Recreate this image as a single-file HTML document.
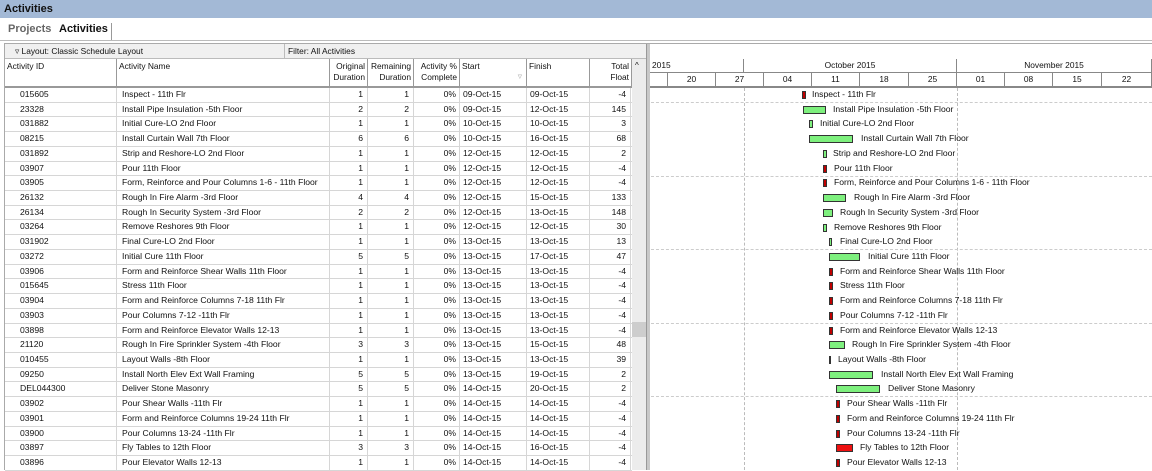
<!DOCTYPE html>
<html><head><meta charset="utf-8"><style>
*{margin:0;padding:0;box-sizing:border-box}
body{width:1152px;height:470px;overflow:hidden;background:#fff;font-family:"Liberation Sans",Arial,sans-serif;font-size:8.6px;color:#111;position:relative}
.title{position:absolute;left:0;top:0;width:1152px;height:18px;background:#a3b9d6;font-weight:bold;font-size:11px;padding:3px 0 0 4px}
.tabs{position:absolute;left:0;top:18px;width:1152px;height:23px;background:#fff;border-bottom:1px solid #bbb}
.tab{position:absolute;top:5px;font-weight:bold;font-size:11px}
.frame{position:absolute;left:4px;top:43px;width:1148px;height:427px;border:1px solid #aaa;border-right:none;border-bottom:none}
.lay{position:absolute;left:5px;top:44px;width:641px;height:15px;background:#f0f0f0;border-bottom:1px solid #bbb;font-size:8.4px}
.hdr{position:absolute;top:59px;height:29px;background:#fff;border-right:1px solid #999;border-bottom:2px solid #999;font-size:8.4px;line-height:10.5px;padding:2px 2px}
.rows{position:absolute;left:5px;top:88px;width:627px}
.r{display:flex;height:14.72px;border-bottom:1px solid #d6d6d6;line-height:13px}
.r div{border-right:1px solid #d6d6d6;white-space:nowrap;overflow:hidden}
.c1{width:112px;padding-left:15px}.c2{width:213px;padding-left:5px}.c3{width:38px;text-align:right;padding-right:4px}.c4{width:46px;text-align:right;padding-right:4px}.c5{width:46px;text-align:right;padding-right:3px}.c6{width:67px;padding-left:3px}.c7{width:63px;padding-left:3px}.c8{width:41px;text-align:right;padding-right:4px}
.sb{position:absolute;left:632px;top:59px;width:14px;height:411px;background:#ececec}
.div{position:absolute;left:646px;top:44px;width:4px;height:426px;background:#c8c8c8;border-left:1px solid #999}
.th{position:absolute;top:59px;height:14px;border-right:1px solid #888;border-bottom:1px solid #888;text-align:center;font-size:8.4px;line-height:13px}
.tw{position:absolute;top:73px;height:15px;border-right:1px solid #888;border-bottom:2px solid #888;text-align:center;font-size:8.4px;line-height:13px}
.vl{position:absolute;top:88px;height:382px;border-left:1px dashed #bbb;width:0}
.hl{position:absolute;left:651px;width:501px;border-top:1px dashed #ccc;height:0}
.b{position:absolute;height:8px;border:1px solid #333}
.g{background:#7ef07e}.rd{background:#c00000}.rb{background:#ee1111}
.l{position:absolute;white-space:nowrap;font-size:8.6px}
</style></head><body>
<div class="title">Activities</div>
<div class="tabs"><span class="tab" style="left:8px;color:#666">Projects</span><span class="tab" style="left:59px;padding-right:3px;border-right:1px solid #999;height:17px">Activities</span></div>
<div class="frame"></div>
<div class="lay"><span style="position:absolute;left:10px;top:2px">▿ Layout: Classic Schedule Layout</span><span style="position:absolute;left:279px;top:0;height:15px;border-left:1px solid #bbb;padding:2px 0 0 3px">Filter: All Activities</span></div>
<div class="hdr" style="left:5px;width:112px">Activity ID</div>
<div class="hdr" style="left:117px;width:213px">Activity Name</div>
<div class="hdr" style="left:330px;width:38px;text-align:right">Original<br>Duration</div>
<div class="hdr" style="left:368px;width:46px;text-align:right">Remaining<br>Duration</div>
<div class="hdr" style="left:414px;width:46px;text-align:right">Activity %<br>Complete</div>
<div class="hdr" style="left:460px;width:67px">Start<span style="position:absolute;right:4px;top:12px;color:#aaa">▿</span></div>
<div class="hdr" style="left:527px;width:63px">Finish</div>
<div class="hdr" style="left:590px;width:42px;text-align:right">Total<br>Float</div>
<div class="sb"><div style="position:absolute;left:3px;top:2px;font-size:8px">^</div><div style="position:absolute;left:0;top:263px;width:14px;height:15px;background:#cdcdcd"></div></div>
<div class="div"></div>
<div class="rows">
<div class="r"><div class="c1">015605</div><div class="c2">Inspect - 11th Flr</div><div class="c3">1</div><div class="c4">1</div><div class="c5">0%</div><div class="c6">09-Oct-15</div><div class="c7">09-Oct-15</div><div class="c8">-4</div></div>
<div class="r"><div class="c1">23328</div><div class="c2">Install Pipe Insulation -5th Floor</div><div class="c3">2</div><div class="c4">2</div><div class="c5">0%</div><div class="c6">09-Oct-15</div><div class="c7">12-Oct-15</div><div class="c8">145</div></div>
<div class="r"><div class="c1">031882</div><div class="c2">Initial Cure-LO 2nd Floor</div><div class="c3">1</div><div class="c4">1</div><div class="c5">0%</div><div class="c6">10-Oct-15</div><div class="c7">10-Oct-15</div><div class="c8">3</div></div>
<div class="r"><div class="c1">08215</div><div class="c2">Install Curtain Wall 7th Floor</div><div class="c3">6</div><div class="c4">6</div><div class="c5">0%</div><div class="c6">10-Oct-15</div><div class="c7">16-Oct-15</div><div class="c8">68</div></div>
<div class="r"><div class="c1">031892</div><div class="c2">Strip and Reshore-LO 2nd Floor</div><div class="c3">1</div><div class="c4">1</div><div class="c5">0%</div><div class="c6">12-Oct-15</div><div class="c7">12-Oct-15</div><div class="c8">2</div></div>
<div class="r"><div class="c1">03907</div><div class="c2">Pour 11th Floor</div><div class="c3">1</div><div class="c4">1</div><div class="c5">0%</div><div class="c6">12-Oct-15</div><div class="c7">12-Oct-15</div><div class="c8">-4</div></div>
<div class="r"><div class="c1">03905</div><div class="c2">Form, Reinforce and Pour Columns 1-6 - 11th Floor</div><div class="c3">1</div><div class="c4">1</div><div class="c5">0%</div><div class="c6">12-Oct-15</div><div class="c7">12-Oct-15</div><div class="c8">-4</div></div>
<div class="r"><div class="c1">26132</div><div class="c2">Rough In Fire Alarm -3rd Floor</div><div class="c3">4</div><div class="c4">4</div><div class="c5">0%</div><div class="c6">12-Oct-15</div><div class="c7">15-Oct-15</div><div class="c8">133</div></div>
<div class="r"><div class="c1">26134</div><div class="c2">Rough In Security System -3rd Floor</div><div class="c3">2</div><div class="c4">2</div><div class="c5">0%</div><div class="c6">12-Oct-15</div><div class="c7">13-Oct-15</div><div class="c8">148</div></div>
<div class="r"><div class="c1">03264</div><div class="c2">Remove Reshores 9th Floor</div><div class="c3">1</div><div class="c4">1</div><div class="c5">0%</div><div class="c6">12-Oct-15</div><div class="c7">12-Oct-15</div><div class="c8">30</div></div>
<div class="r"><div class="c1">031902</div><div class="c2">Final Cure-LO 2nd Floor</div><div class="c3">1</div><div class="c4">1</div><div class="c5">0%</div><div class="c6">13-Oct-15</div><div class="c7">13-Oct-15</div><div class="c8">13</div></div>
<div class="r"><div class="c1">03272</div><div class="c2">Initial Cure 11th Floor</div><div class="c3">5</div><div class="c4">5</div><div class="c5">0%</div><div class="c6">13-Oct-15</div><div class="c7">17-Oct-15</div><div class="c8">47</div></div>
<div class="r"><div class="c1">03906</div><div class="c2">Form and Reinforce Shear Walls 11th Floor</div><div class="c3">1</div><div class="c4">1</div><div class="c5">0%</div><div class="c6">13-Oct-15</div><div class="c7">13-Oct-15</div><div class="c8">-4</div></div>
<div class="r"><div class="c1">015645</div><div class="c2">Stress 11th Floor</div><div class="c3">1</div><div class="c4">1</div><div class="c5">0%</div><div class="c6">13-Oct-15</div><div class="c7">13-Oct-15</div><div class="c8">-4</div></div>
<div class="r"><div class="c1">03904</div><div class="c2">Form and Reinforce Columns 7-18 11th Flr</div><div class="c3">1</div><div class="c4">1</div><div class="c5">0%</div><div class="c6">13-Oct-15</div><div class="c7">13-Oct-15</div><div class="c8">-4</div></div>
<div class="r"><div class="c1">03903</div><div class="c2">Pour Columns 7-12 -11th Flr</div><div class="c3">1</div><div class="c4">1</div><div class="c5">0%</div><div class="c6">13-Oct-15</div><div class="c7">13-Oct-15</div><div class="c8">-4</div></div>
<div class="r"><div class="c1">03898</div><div class="c2">Form and Reinforce Elevator Walls 12-13</div><div class="c3">1</div><div class="c4">1</div><div class="c5">0%</div><div class="c6">13-Oct-15</div><div class="c7">13-Oct-15</div><div class="c8">-4</div></div>
<div class="r"><div class="c1">21120</div><div class="c2">Rough In Fire Sprinkler System -4th Floor</div><div class="c3">3</div><div class="c4">3</div><div class="c5">0%</div><div class="c6">13-Oct-15</div><div class="c7">15-Oct-15</div><div class="c8">48</div></div>
<div class="r"><div class="c1">010455</div><div class="c2">Layout Walls -8th Floor</div><div class="c3">1</div><div class="c4">1</div><div class="c5">0%</div><div class="c6">13-Oct-15</div><div class="c7">13-Oct-15</div><div class="c8">39</div></div>
<div class="r"><div class="c1">09250</div><div class="c2">Install North Elev Ext Wall Framing</div><div class="c3">5</div><div class="c4">5</div><div class="c5">0%</div><div class="c6">13-Oct-15</div><div class="c7">19-Oct-15</div><div class="c8">2</div></div>
<div class="r"><div class="c1">DEL044300</div><div class="c2">Deliver Stone Masonry</div><div class="c3">5</div><div class="c4">5</div><div class="c5">0%</div><div class="c6">14-Oct-15</div><div class="c7">20-Oct-15</div><div class="c8">2</div></div>
<div class="r"><div class="c1">03902</div><div class="c2">Pour Shear Walls -11th Flr</div><div class="c3">1</div><div class="c4">1</div><div class="c5">0%</div><div class="c6">14-Oct-15</div><div class="c7">14-Oct-15</div><div class="c8">-4</div></div>
<div class="r"><div class="c1">03901</div><div class="c2">Form and Reinforce Columns 19-24 11th Flr</div><div class="c3">1</div><div class="c4">1</div><div class="c5">0%</div><div class="c6">14-Oct-15</div><div class="c7">14-Oct-15</div><div class="c8">-4</div></div>
<div class="r"><div class="c1">03900</div><div class="c2">Pour Columns 13-24 -11th Flr</div><div class="c3">1</div><div class="c4">1</div><div class="c5">0%</div><div class="c6">14-Oct-15</div><div class="c7">14-Oct-15</div><div class="c8">-4</div></div>
<div class="r"><div class="c1">03897</div><div class="c2">Fly Tables to 12th Floor</div><div class="c3">3</div><div class="c4">3</div><div class="c5">0%</div><div class="c6">14-Oct-15</div><div class="c7">16-Oct-15</div><div class="c8">-4</div></div>
<div class="r"><div class="c1">03896</div><div class="c2">Pour Elevator Walls 12-13</div><div class="c3">1</div><div class="c4">1</div><div class="c5">0%</div><div class="c6">14-Oct-15</div><div class="c7">14-Oct-15</div><div class="c8">-4</div></div>
</div>
<!-- gantt header -->
<div class="th" style="left:650px;width:94px;text-align:left;padding-left:2px">2015</div>
<div class="th" style="left:744px;width:213px">October 2015</div>
<div class="th" style="left:957px;width:195px">November 2015</div>
<div class="tw" style="left:650px;width:18px"></div>
<div class="tw" style="left:668px;width:48px">20</div>
<div class="tw" style="left:716px;width:48px">27</div>
<div class="tw" style="left:764px;width:48px">04</div>
<div class="tw" style="left:812px;width:48px">11</div>
<div class="tw" style="left:860px;width:49px">18</div>
<div class="tw" style="left:909px;width:48px">25</div>
<div class="tw" style="left:957px;width:48px">01</div>
<div class="tw" style="left:1005px;width:48px">08</div>
<div class="tw" style="left:1053px;width:49px">15</div>
<div class="tw" style="left:1102px;width:50px">22</div>
<div class="vl" style="left:744px"></div>
<div class="vl" style="left:957px"></div>
<div class="hl" style="top:102px"></div>
<div class="hl" style="top:176px"></div>
<div class="hl" style="top:249px"></div>
<div class="hl" style="top:323px"></div>
<div class="hl" style="top:396px"></div>
<!-- bars: row top = 88 + i*14.72, bar top +3 -->
<div class="b rd" style="left:802px;top:91px;width:4px"></div><div class="l" style="left:812px;top:89px">Inspect - 11th Flr</div>
<div class="b g" style="left:803px;top:105.7px;width:23px"></div><div class="l" style="left:833px;top:103.7px">Install Pipe Insulation -5th Floor</div>
<div class="b g" style="left:809px;top:120.4px;width:4px"></div><div class="l" style="left:820px;top:118.4px">Initial Cure-LO 2nd Floor</div>
<div class="b g" style="left:809px;top:135.2px;width:44px"></div><div class="l" style="left:861px;top:133.2px">Install Curtain Wall 7th Floor</div>
<div class="b g" style="left:823px;top:149.9px;width:4px"></div><div class="l" style="left:833px;top:147.9px">Strip and Reshore-LO 2nd Floor</div>
<div class="b rd" style="left:823px;top:164.6px;width:4px"></div><div class="l" style="left:834px;top:162.6px">Pour 11th Floor</div>
<div class="b rd" style="left:823px;top:179.3px;width:4px"></div><div class="l" style="left:834px;top:177.3px">Form, Reinforce and Pour Columns 1-6 - 11th Floor</div>
<div class="b g" style="left:823px;top:194px;width:23px"></div><div class="l" style="left:854px;top:192px">Rough In Fire Alarm -3rd Floor</div>
<div class="b g" style="left:823px;top:208.8px;width:10px"></div><div class="l" style="left:840px;top:206.8px">Rough In Security System -3rd Floor</div>
<div class="b g" style="left:823px;top:223.5px;width:4px"></div><div class="l" style="left:834px;top:221.5px">Remove Reshores 9th Floor</div>
<div class="b g" style="left:829px;top:238.2px;width:3px"></div><div class="l" style="left:840px;top:236.2px">Final Cure-LO 2nd Floor</div>
<div class="b g" style="left:829px;top:252.9px;width:31px"></div><div class="l" style="left:868px;top:250.9px">Initial Cure 11th Floor</div>
<div class="b rd" style="left:829px;top:267.6px;width:4px"></div><div class="l" style="left:840px;top:265.6px">Form and Reinforce Shear Walls 11th Floor</div>
<div class="b rd" style="left:829px;top:282.4px;width:4px"></div><div class="l" style="left:840px;top:280.4px">Stress 11th Floor</div>
<div class="b rd" style="left:829px;top:297.1px;width:4px"></div><div class="l" style="left:840px;top:295.1px">Form and Reinforce Columns 7-18 11th Flr</div>
<div class="b rd" style="left:829px;top:311.8px;width:4px"></div><div class="l" style="left:840px;top:309.8px">Pour Columns 7-12 -11th Flr</div>
<div class="b rd" style="left:829px;top:326.5px;width:4px"></div><div class="l" style="left:840px;top:324.5px">Form and Reinforce Elevator Walls 12-13</div>
<div class="b g" style="left:829px;top:341.2px;width:16px"></div><div class="l" style="left:852px;top:339.2px">Rough In Fire Sprinkler System -4th Floor</div>
<div class="b" style="left:829px;top:356px;width:2px;background:#333"></div><div class="l" style="left:838px;top:354px">Layout Walls -8th Floor</div>
<div class="b g" style="left:829px;top:370.7px;width:44px"></div><div class="l" style="left:881px;top:368.7px">Install North Elev Ext Wall Framing</div>
<div class="b g" style="left:836px;top:385.4px;width:44px"></div><div class="l" style="left:888px;top:383.4px">Deliver Stone Masonry</div>
<div class="b rd" style="left:836px;top:400.1px;width:4px"></div><div class="l" style="left:847px;top:398.1px">Pour Shear Walls -11th Flr</div>
<div class="b rd" style="left:836px;top:414.8px;width:4px"></div><div class="l" style="left:847px;top:412.8px">Form and Reinforce Columns 19-24 11th Flr</div>
<div class="b rd" style="left:836px;top:429.6px;width:4px"></div><div class="l" style="left:847px;top:427.6px">Pour Columns 13-24 -11th Flr</div>
<div class="b rb" style="left:836px;top:444.3px;width:17px"></div><div class="l" style="left:860px;top:442.3px">Fly Tables to 12th Floor</div>
<div class="b rd" style="left:836px;top:459px;width:4px"></div><div class="l" style="left:847px;top:457px">Pour Elevator Walls 12-13</div>
</body></html>
